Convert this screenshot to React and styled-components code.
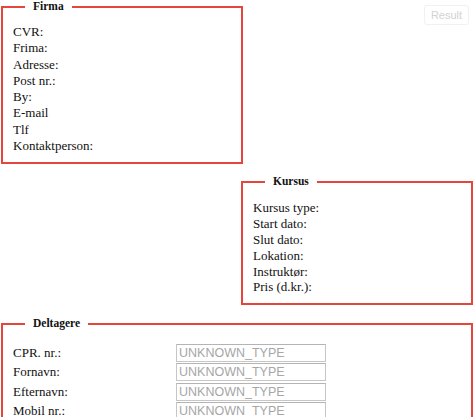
import styled, { createGlobalStyle } from "styled-components";

const GlobalStyle = createGlobalStyle`
  html, body {
    margin: 0;
    padding: 0;
    background: #fff;
  }
  body {
    font-family: "Liberation Serif", "Times New Roman", serif;
    color: #111;
  }
`;

const firmaFields = [
  "CVR:",
  "Frima:",
  "Adresse:",
  "Post nr.:",
  "By:",
  "E-mail",
  "Tlf",
  "Kontaktperson:",
];

const kursusFields = [
  "Kursus type:",
  "Start dato:",
  "Slut dato:",
  "Lokation:",
  "Instruktør:",
  "Pris (d.kr.):",
];

const deltagerFields = ["CPR. nr.:", "Fornavn:", "Efternavn:", "Mobil nr.:"];

const App = () => {
  return (
    <Page>
      <GlobalStyle />
      <TopRow>
        <Box $width="242px" $top="11px">
          <Legend>Firma</Legend>
          <FieldList $lh="16.3px">
            {firmaFields.map((f) => (
              <div key={f}>{f}</div>
            ))}
          </FieldList>
        </Box>
        <ResultButton type="button">Result</ResultButton>
      </TopRow>

      <Box $width="232px" $right $gap="11px" $top="12px">
        <Legend>Kursus</Legend>
        <FieldList $lh="15.8px">
          {kursusFields.map((f) => (
            <div key={f}>{f}</div>
          ))}
        </FieldList>
      </Box>

      {/* participants, with inputs */}
      <Box $gap="12px">
        <Legend>Deltagere</Legend>
        <InputGrid>
          {deltagerFields.map((f) => (
            <InputRow key={f}>
              <span>{f}</span>
              <TypeInput placeholder="UNKNOWN_TYPE" />
            </InputRow>
          ))}
        </InputGrid>
      </Box>
    </Page>
  );
};

const Page = styled.div`
  display: flex;
  flex-direction: column;
  padding: 0 1px;
`;

const TopRow = styled.div`
  display: flex;
  justify-content: space-between;
  align-items: flex-start;
`;

const Box = styled.fieldset`
  box-sizing: border-box;
  width: ${(p) => p.$width || "auto"};
  margin: ${(p) => p.$gap || "0"} 0 0 ${(p) => (p.$right ? "auto" : "0")};
  padding: ${(p) => p.$top || "10px"} 10px 8px 10px;
  border: 2px solid #e4463b;
  min-inline-size: 0;
`;

const Legend = styled.legend`
  margin-left: 12px;
  padding: 0 8px;
  font-family: "Liberation Serif", "Times New Roman", serif;
  font-weight: bold;
  font-size: 11.5px;
  line-height: 13px;
  color: #111;
`;

const FieldList = styled.div`
  font-size: 13px;
  line-height: ${(p) => p.$lh};
`;

const InputGrid = styled.div`
  display: flex;
  flex-direction: column;
  gap: 1.3px;
  padding-top: 4px;
  font-size: 13px;
`;

const InputRow = styled.div`
  display: grid;
  grid-template-columns: 163px 150px;
  align-items: center;
  height: 18px;
`;

const TypeInput = styled.input`
  box-sizing: border-box;
  width: 150px;
  height: 18px;
  margin: 0;
  padding: 0 2px;
  border: 1px solid #c6c6c6;
  border-top-color: #b4b4b4;
  font-family: "Liberation Sans", Arial, sans-serif;
  font-size: 12.5px;
  background: #fff;

  &::placeholder {
    color: #a6a6a6;
  }
`;

const ResultButton = styled.button`
  width: 45px;
  height: 20px;
  margin: 5px 4px 0 0;
  padding: 0;
  border: 1px solid #f1f1f1;
  border-radius: 3px;
  background: #fff;
  color: #d2d2d2;
  font-family: "Liberation Sans", Arial, sans-serif;
  font-size: 11px;
`;

export default App;
